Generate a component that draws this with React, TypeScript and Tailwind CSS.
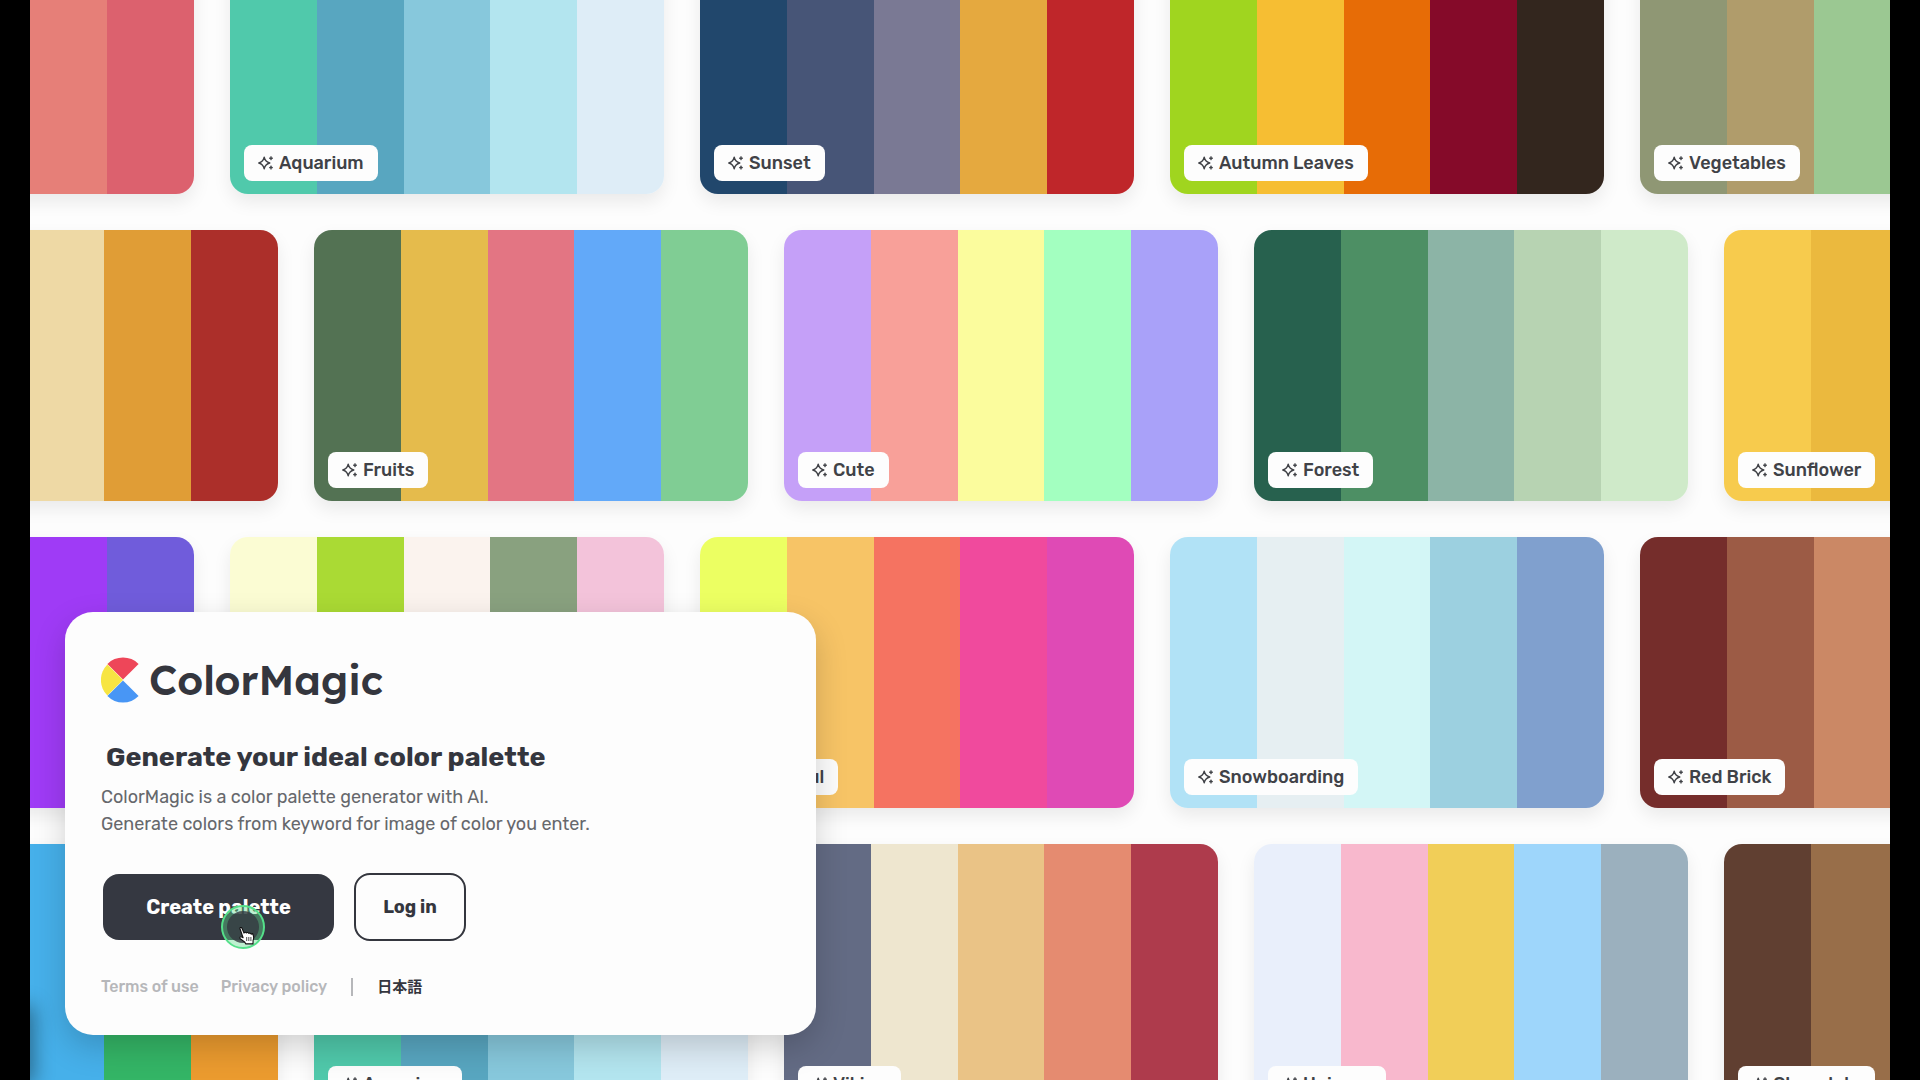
type Palette = { name?: string; colors: string[] };

const rows: { offset: string; palettes: Palette[] }[] = [
  {
    offset: '-ml-[270px]',
    palettes: [
      { colors: ['#f9d9a8', '#f5bd92', '#ee9c84', '#e67f78', '#dc616e'] },
      { name: 'Aquarium', colors: ['#50c9ab', '#58a6c0', '#87c8dc', '#b3e5ef', '#deedf7'] },
      { name: 'Sunset', colors: ['#21476c', '#475577', '#7a7994', '#e5a93f', '#bf262a'] },
      { name: 'Autumn Leaves', colors: ['#a0d51f', '#f6be33', '#e76c06', '#850a29', '#33261e'] },
      { name: 'Vegetables', colors: ['#8f9774', '#b09c6b', '#9bc892', '#6fa76a', '#4f8a4c'] },
    ],
  },
  {
    offset: '-ml-[186px]',
    palettes: [
      { colors: ['#f7ebcb', '#f3e2b9', '#eed9a5', '#e09d36', '#ac2f2a'] },
      { name: 'Fruits', colors: ['#537253', '#e5bb4c', '#e37583', '#62a9f9', '#80cd94'] },
      { name: 'Cute', colors: ['#c5a0f8', '#f8a099', '#fbfc9d', '#a3ffc0', '#a9a1f9'] },
      { name: 'Forest', colors: ['#27614e', '#4d8f64', '#8cb4a6', '#b7d3b2', '#cfeac9'] },
      { name: 'Sunflower', colors: ['#f7cb4d', '#ebb93e', '#dfa02f', '#8a5a22', '#4b3218'] },
    ],
  },
  {
    offset: '-ml-[270px]',
    palettes: [
      { colors: ['#2b1055', '#5a1fa0', '#7c2bd0', '#9f3bf6', '#705cdb'] },
      { colors: ['#fbfcd3', '#aada34', '#fbf3ee', '#89a17f', '#f3c3da'] },
      { name: 'Cheerful', colors: ['#ecff62', '#f7c466', '#f57361', '#f04a9d', '#df4ab5'] },
      { name: 'Snowboarding', colors: ['#b1e2f6', '#e6eff2', '#d3f6f6', '#9cd0e0', '#80a0ce'] },
      { name: 'Red Brick', colors: ['#752d2b', '#9c5b45', '#cb8865', '#d9a384', '#e8c2a8'] },
    ],
  },
  {
    offset: '-ml-[186px]',
    palettes: [
      { colors: ['#e74c3c', '#f1c40f', '#46b0ea', '#34b566', '#eb9b2f'] },
      { name: 'Aquarium', colors: ['#50c9ab', '#58a6c0', '#87c8dc', '#b3e5ef', '#deedf7'] },
      { name: 'Viking', colors: ['#636b84', '#eee6cf', '#eac386', '#e58b70', '#ae3b4c'] },
      { name: 'Unicorn', colors: ['#e9effb', '#f8b8cd', '#f1ce58', '#9ed6fb', '#9bb0be'] },
      { name: 'Chocolate', colors: ['#603f31', '#986e49', '#b98b62', '#d3ac84', '#ecd3b4'] },
    ],
  },
];

function Sparkles() {
  return (
    <svg viewBox="0 0 16 16" className="h-4 w-4 shrink-0" fill="none" aria-hidden="true">
      <path
        d="M6.2 2.2Q7.3 6.9 11.8 8Q7.3 9.1 6.2 13.8Q5.1 9.1 .8 8Q5.1 6.9 6.2 2.2Z"
        stroke="currentColor"
        strokeWidth="1.4"
        strokeLinejoin="round"
      />
      <path
        d="M13 1.2Q13.3 2.9 15 3.2Q13.3 3.5 13 5.2Q12.7 3.5 11 3.2Q12.7 2.9 13 1.2ZM13 10.6Q13.3 12.3 15 12.6Q13.3 12.9 13 14.6Q12.7 12.9 11 12.6Q12.7 12.3 13 10.6Z"
        fill="currentColor"
        stroke="currentColor"
        strokeWidth=".5"
      />
    </svg>
  );
}

function PaletteCard({ name, colors }: Palette) {
  return (
    <article className="relative flex h-[271px] w-[434px] shrink-0 rounded-[18px] shadow-[0_8px_18px_rgba(0,0,0,0.08)]">
      <div className="flex flex-1 overflow-hidden rounded-[18px]">
        {colors.map((color) => (
          <span key={color} className="flex-1" style={{ backgroundColor: color }} />
        ))}
      </div>
      {name && (
        <button
          type="button"
          className="absolute bottom-[13px] left-[14px] flex h-9 items-center gap-[5px] rounded-lg bg-[#fdfdfd] px-[14px] text-lg font-medium whitespace-nowrap text-[#404247]"
        >
          <Sparkles />
          {name}
        </button>
      )}
    </article>
  );
}

function LogoMark() {
  return (
    <svg viewBox="0 0 38 46" className="h-[46px] w-[38px]" aria-hidden="true">
      <path d="M22 22.5 6.4 6.9A22 22 0 0 1 37.6 6.9Z" fill="#ee4659" />
      <path d="M22 23 6.4 7.4A22 22 0 0 0 6.4 38.6Z" fill="#f7e543" />
      <path d="M22 23.5 6.4 39.1A22 22 0 0 0 37.6 39.1Z" fill="#4896f5" />
    </svg>
  );
}

function Pointer() {
  return (
    <span className="pointer-events-none absolute top-[31px] left-[118px] flex h-11 w-11 items-center justify-center rounded-full border-2 border-[#55e08a] bg-[#5fdc8c]/40">
      <span className="h-8 w-8 rounded-full bg-[#353841]/80" />
      <svg viewBox="0 0 16 18" className="absolute top-[20px] left-4 h-[18px] w-4" aria-hidden="true">
        <path
          d="M1 1.8C.5.4 2.4-.2 3 1.2L5 6.1C5.3 4.9 7 4.9 7.4 6C8 5.2 9.4 5.4 9.8 6.4C10.6 5.8 11.8 6.2 12.1 7.2L13.6 6.6C14.6 8.8 15.2 11 14.1 13.2L14 16.9H6.6L5.9 15.3L1.2 11.6C.2 10.4 1.5 9.3 2.7 10L4.1 10.7Z"
          fill="#fff"
          stroke="#111"
          strokeWidth="1.1"
          strokeLinejoin="round"
        />
        <path d="M7.7 10v4M9.8 10v4M11.9 10v4" stroke="#222" strokeWidth=".8" />
      </svg>
    </span>
  );
}

export default function App() {
  return (
    <div className="h-screen overflow-hidden bg-black px-[30px] font-['Rubik','Inter','Noto_Sans_CJK_JP',sans-serif]">
      <main className="relative h-full overflow-hidden bg-[#fdfdfd]">
        <div className="-mt-[77px] flex flex-col gap-9">
          {rows.map((row, i) => (
            <div key={i} className={`flex gap-9 ${row.offset}`}>
              {row.palettes.map((palette, j) => (
                <PaletteCard key={j} {...palette} />
              ))}
            </div>
          ))}
        </div>
        <span className="absolute bottom-0 -left-5 h-[70px] w-5 shadow-[0_0_20px_4px_rgba(0,0,0,0.4)]" />

        <section className="absolute bottom-[45px] left-[35px] w-[751px] rounded-[28px] bg-[#fdfdfd] px-9 pt-[45px] pb-9 text-[#34363e] shadow-[0_12px_32px_rgba(0,0,0,0.18)]">
          <div className="flex items-center gap-[10px]">
            <LogoMark />
            <span className="font-['Lexend','Inter',sans-serif] text-[41px] leading-[46px] font-semibold">ColorMagic</span>
          </div>
          <h1 className="mt-9 pl-[5px] text-[27px] leading-9 font-bold">Generate your ideal color palette</h1>
          <p className="mt-[9px] text-lg leading-[27px] text-[#66686c]">
            ColorMagic is a color palette generator with AI.
            <br />
            Generate colors from keyword for image of color you enter.
          </p>
          <div className="mt-[35px] flex items-center gap-5 pl-[2px] font-bold">
            <button type="button" className="relative h-[66px] w-[231px] rounded-2xl bg-[#353841] text-xl text-white">
              Create palette
              <Pointer />
            </button>
            <button type="button" className="h-[68px] w-[112px] rounded-2xl border-2 border-[#34363e] text-lg">
              Log in
            </button>
          </div>
          <footer className="mt-[34px] flex h-6 items-center text-base font-medium text-[#b6b7ba]">
            <a href="#terms">Terms of use</a>
            <a href="#privacy" className="ml-[22px]">Privacy policy</a>
            <span className="mx-6 h-[18px] w-[2px] bg-[#b6b7ba]" />
            <a href="#ja" lang="ja" className="text-[15px] font-bold text-[#34363e]">日本語</a>
          </footer>
        </section>
      </main>
    </div>
  );
}
